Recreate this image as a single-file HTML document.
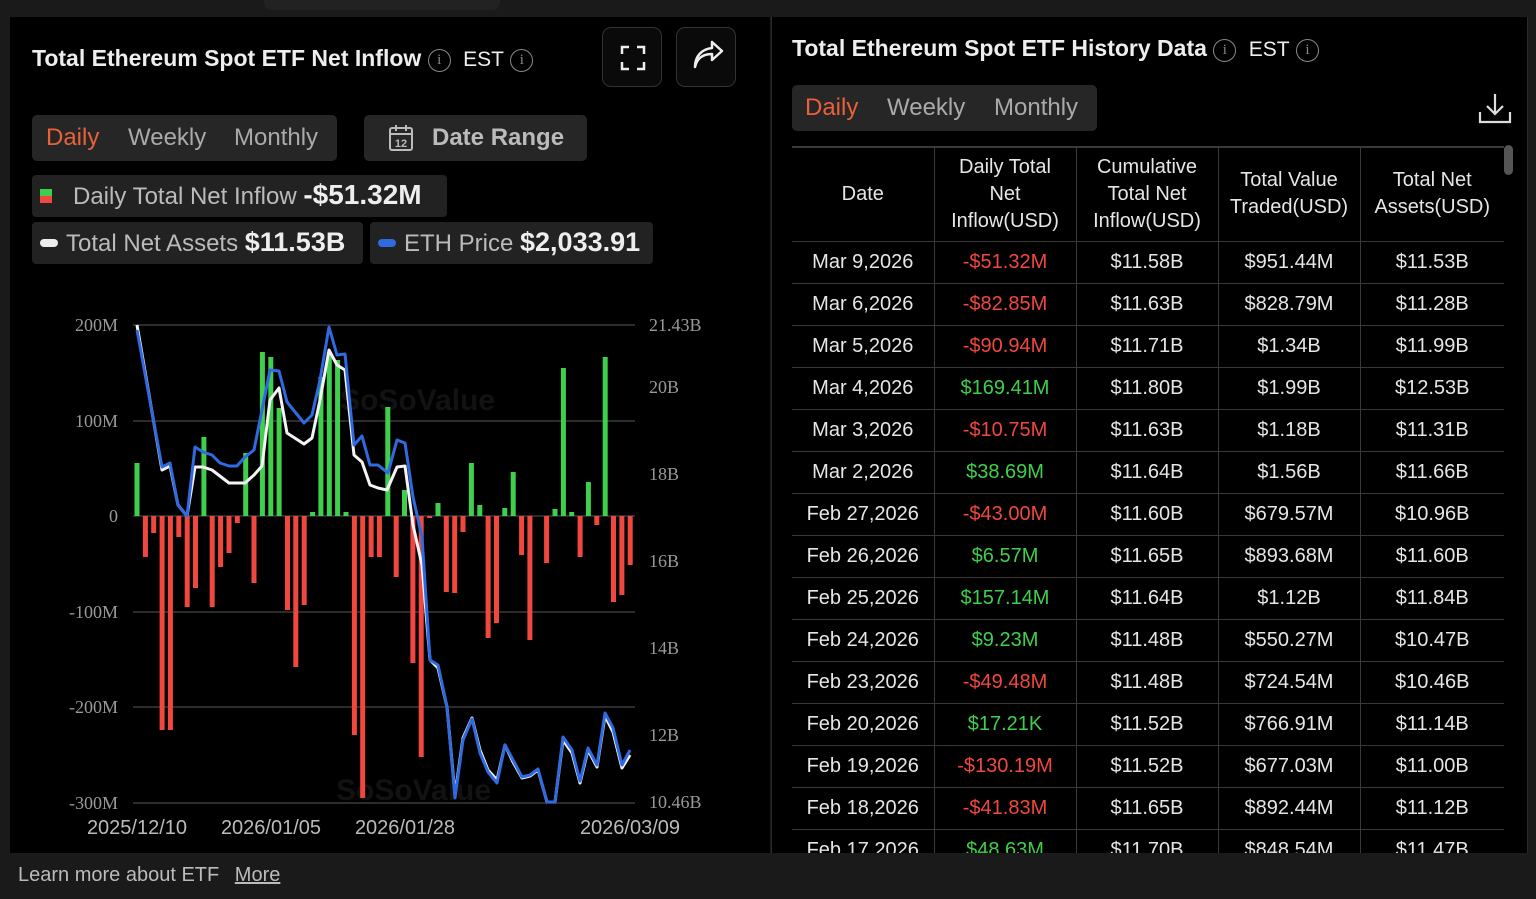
<!DOCTYPE html>
<html><head><meta charset="utf-8"><style>
*{margin:0;padding:0;box-sizing:border-box}
body{width:1536px;height:899px;background:#1a1a1a;overflow:hidden;font-family:"Liberation Sans",sans-serif;color:#e8e8e8;position:relative}
.abs{position:absolute}
.lp{left:10px;top:17px;width:760px;height:836px;background:#000}
.rp{left:771px;top:17px;width:757px;height:836px;background:#000;border-left:1px solid #2a2a2a;border-right:1px solid #2a2a2a}
.top{left:26px;top:0;width:1510px;height:17px;background:#1a1a1a;border-radius:0 0 10px 10px}
.top2{left:264px;top:0;width:236px;height:10px;background:#222;border-radius:0 0 8px 8px}
.title{font-size:23px;font-weight:bold;color:#eee;white-space:nowrap}
.info{display:inline-block;width:23px;height:23px;border:1.5px solid #888;border-radius:50%;color:#888;font-size:15px;text-align:center;line-height:20px;font-weight:normal;vertical-align:2px;font-family:"Liberation Serif",serif}
.seg{background:#262626;border-radius:5px;font-size:24px;color:#aaa}
.seg span{position:absolute;top:9px}
.pill{background:#222;border-radius:4px;font-size:24px;color:#bbb;white-space:nowrap;padding-left:8px;line-height:40px}
.pill b{color:#eee}
.btn{border:1.5px solid #333;border-radius:9px;width:60px;height:60px;background:#0a0a0a}
.ax{font-family:"Liberation Serif",serif;font-size:18px;fill:#999}
table{border-collapse:collapse;position:absolute;left:792px;top:146px;width:712px;table-layout:fixed}
td{border:1.5px solid #3a3a3a;text-align:center;font-size:20px;height:42px;color:#e6e6e6;border-left:none}
td:first-child{border-left:none}
td:last-child{border-right:none}
tr.h td{height:94px;line-height:27px;border-top:2px solid #3a3a3a}
.r{color:#f0483e}.g{color:#3fcf4c}
</style></head><body>
<div class="abs top"></div><div class="abs top2"></div>
<div class="abs lp"></div>
<div class="abs rp"></div>

<div class="abs title" style="left:32px;top:45px">Total Ethereum Spot ETF Net Inflow <span class="info">i</span> <span style="font-weight:normal;font-size:21px;margin-left:6px">EST</span> <span class="info">i</span></div>
<div class="abs btn" style="left:602px;top:27px"><svg width="60" height="60"><path d="M19 26v-7h7M34 19h7v7M41 34v7h-7M26 41h-7v-7" stroke="#eee" stroke-width="2.5" fill="none"/></svg></div>
<div class="abs btn" style="left:676px;top:27px"><svg width="60" height="60"><path d="M18 39c2-9 8-13 17-13v6l10-9-10-9v6c-10 1-17 8-17 19z" stroke="#eee" stroke-width="2.5" fill="none" stroke-linejoin="round"/></svg></div>

<div class="abs seg" style="left:32px;top:115px;width:305px;height:46px"><span style="left:14px;color:#e8613a">Daily</span><span style="left:96px">Weekly</span><span style="left:202px">Monthly</span></div>
<div class="abs seg" style="left:364px;top:115px;width:223px;height:46px;font-weight:bold;color:#bbb"><svg class="abs" style="left:24px;top:8px" width="26" height="30"><rect x="2" y="5" width="22" height="22" rx="2" stroke="#bbb" stroke-width="2" fill="none"/><path d="M2 11h22M8 2v6M18 2v6" stroke="#bbb" stroke-width="2"/><text x="13" y="24" font-size="11" fill="#bbb" text-anchor="middle" font-family="Liberation Sans">12</text></svg><span style="left:68px">Date Range</span></div>

<div class="abs pill" style="left:32px;top:175px;width:415px"><svg width="14" height="16" style="vertical-align:-1px;margin-right:19px"><rect y="0" width="12" height="7" fill="#3fcf4c"/><rect y="7" width="12" height="7" fill="#f0483e"/></svg>Daily Total Net Inflow <b style="font-size:28px">-$51.32M</b></div>
<div class="abs pill" style="left:32px;top:222px;width:331px"><span style="display:inline-block;width:18px;height:8px;background:#eee;border-radius:4px;vertical-align:4px;margin-right:8px"></span>Total Net Assets <b style="font-size:27px">$11.53B</b></div>
<div class="abs pill" style="left:370px;top:222px;width:283px"><span style="display:inline-block;width:18px;height:8px;background:#2f6ae0;border-radius:4px;vertical-align:4px;margin-right:8px"></span>ETH Price <b style="font-size:27px">$2,033.91</b></div>

<svg class="abs" style="left:0;top:0" width="770" height="853">
<g stroke="#3a3a3a" stroke-width="1.5">
<line x1="133" y1="325" x2="635" y2="325"/><line x1="133" y1="421" x2="635" y2="421"/><line x1="133" y1="516" x2="635" y2="516"/><line x1="133" y1="612" x2="635" y2="612"/><line x1="133" y1="707" x2="635" y2="707"/><line x1="133" y1="803" x2="635" y2="803"/>
</g>
<g class="ax" text-anchor="end"><text x="118" y="331">200M</text><text x="118" y="427">100M</text><text x="118" y="522">0</text><text x="118" y="618">-100M</text><text x="118" y="713">-200M</text><text x="118" y="809">-300M</text></g>
<g class="ax"><text x="649" y="331">21.43B</text><text x="649" y="393">20B</text><text x="649" y="480">18B</text><text x="649" y="567">16B</text><text x="649" y="654">14B</text><text x="649" y="741">12B</text><text x="649" y="808">10.46B</text></g>
<g font-size="20" fill="#bbb" text-anchor="middle"><text x="137" y="834">2025/12/10</text><text x="271" y="834">2026/01/05</text><text x="405" y="834">2026/01/28</text><text x="630" y="834">2026/03/09</text></g>
<g opacity="0.13" fill="#888" font-weight="bold" font-size="30"><text x="340" y="410">SoSoValue</text><text x="336" y="800">SoSoValue</text></g>
<g stroke-width="5">
<g stroke="#3fcf4c">
<line x1="137" y1="516" x2="137" y2="463"/><line x1="203.9" y1="516" x2="203.9" y2="437"/><line x1="245.7" y1="516" x2="245.7" y2="453"/><line x1="262.4" y1="516" x2="262.4" y2="352"/><line x1="270.8" y1="516" x2="270.8" y2="357"/><line x1="279.1" y1="516" x2="279.1" y2="408"/><line x1="312.6" y1="516" x2="312.6" y2="512"/><line x1="320.9" y1="516" x2="320.9" y2="377"/><line x1="329.3" y1="516" x2="329.3" y2="352"/><line x1="337.6" y1="516" x2="337.6" y2="360"/><line x1="346" y1="516" x2="346" y2="512"/><line x1="387.8" y1="516" x2="387.8" y2="407"/><line x1="404.5" y1="516" x2="404.5" y2="490"/><line x1="438" y1="516" x2="438" y2="503"/><line x1="471.4" y1="516" x2="471.4" y2="463"/><line x1="479.8" y1="516" x2="479.8" y2="505"/><line x1="504.8" y1="516" x2="504.8" y2="508"/><line x1="513.2" y1="516" x2="513.2" y2="472"/><line x1="555" y1="516" x2="555" y2="509"/><line x1="563.4" y1="516" x2="563.4" y2="368"/><line x1="571.7" y1="516" x2="571.7" y2="512"/><line x1="588.4" y1="516" x2="588.4" y2="482"/><line x1="605.2" y1="516" x2="605.2" y2="357"/>
</g>
<g stroke="#f0483e">
<line x1="145.4" y1="516" x2="145.4" y2="557"/><line x1="153.7" y1="516" x2="153.7" y2="533"/><line x1="162.1" y1="516" x2="162.1" y2="730"/><line x1="170.4" y1="516" x2="170.4" y2="730"/><line x1="178.8" y1="516" x2="178.8" y2="537"/><line x1="187.2" y1="516" x2="187.2" y2="607"/><line x1="195.5" y1="516" x2="195.5" y2="588"/><line x1="212.2" y1="516" x2="212.2" y2="607"/><line x1="220.6" y1="516" x2="220.6" y2="567"/><line x1="229" y1="516" x2="229" y2="553"/><line x1="237.3" y1="516" x2="237.3" y2="523"/><line x1="254" y1="516" x2="254" y2="583"/><line x1="287.5" y1="516" x2="287.5" y2="610"/><line x1="295.8" y1="516" x2="295.8" y2="667"/><line x1="304.2" y1="516" x2="304.2" y2="605"/><line x1="354.4" y1="516" x2="354.4" y2="735"/><line x1="362.7" y1="516" x2="362.7" y2="798"/><line x1="371.1" y1="516" x2="371.1" y2="557"/><line x1="379.4" y1="516" x2="379.4" y2="557"/><line x1="396.2" y1="516" x2="396.2" y2="577"/><line x1="412.9" y1="516" x2="412.9" y2="663"/><line x1="421.2" y1="516" x2="421.2" y2="757"/><line x1="429.6" y1="516" x2="429.6" y2="518"/><line x1="446.3" y1="516" x2="446.3" y2="592"/><line x1="454.7" y1="516" x2="454.7" y2="593"/><line x1="463" y1="516" x2="463" y2="532"/><line x1="488.1" y1="516" x2="488.1" y2="638"/><line x1="496.5" y1="516" x2="496.5" y2="623"/><line x1="521.6" y1="516" x2="521.6" y2="555"/><line x1="529.9" y1="516" x2="529.9" y2="640"/><line x1="546.6" y1="516" x2="546.6" y2="563"/><line x1="580.1" y1="516" x2="580.1" y2="557"/><line x1="596.8" y1="516" x2="596.8" y2="525"/><line x1="613.5" y1="516" x2="613.5" y2="602"/><line x1="621.9" y1="516" x2="621.9" y2="595"/><line x1="630.2" y1="516" x2="630.2" y2="565"/>
</g></g>
<polyline fill="none" stroke="#f4f4f4" stroke-width="3" stroke-linejoin="round" points="137,325 162,470 170,466 178,505 187,516 195,467 203,467 212,470 229,483 245,483 254,475 262,466 270,400 279,388 287,433 304,444 312,438 320,400 329,350 337,365 345,370 354,455 362,462 370,485 378,488 387,490 397,467 405,466 413,525 422,565 430,660 438,668 447,707 455,795 463,738 472,718 480,750 488,770 497,780 505,745 513,762 522,778 530,776 538,770 547,802 555,802 563,740 572,753 580,783 588,750 597,767 605,716 613,732 622,768 630,755"/>
<polyline fill="none" stroke="#2f6ae0" stroke-width="3" stroke-linejoin="round" points="137,330 162,467 170,463 178,505 187,516 195,447 203,452 212,455 220,463 229,466 237,466 245,457 254,450 262,410 270,370 279,371 287,402 304,423 312,415 320,380 329,327 337,355 345,354 354,445 362,436 370,465 378,465 388,473 397,440 405,443 413,497 422,537 430,660 438,665 447,707 455,798 463,740 472,719 480,753 488,772 497,783 505,745 513,760 522,777 530,775 538,769 547,802 555,802 563,737 572,750 580,781 588,748 597,765 605,713 613,728 622,765 630,750"/>
</svg>

<div class="abs title" style="left:792px;top:35px">Total Ethereum Spot ETF History Data <span class="info">i</span> <span style="font-weight:normal;font-size:21px;margin-left:6px">EST</span> <span class="info">i</span></div>
<div class="abs seg" style="left:792px;top:85px;width:305px;height:46px"><span style="left:13px;color:#e8613a">Daily</span><span style="left:95px">Weekly</span><span style="left:202px">Monthly</span></div>
<svg class="abs" style="left:1478px;top:92px" width="34" height="32"><path d="M17 2v20M9 14l8 8 8-8M2 20v10h30V20" stroke="#ddd" stroke-width="2.2" fill="none"/></svg>
<div class="abs" style="left:1504px;top:145px;width:9px;height:30px;background:#555;border-radius:5px"></div>

<div class="abs" style="left:792px;top:146px;width:712px;height:707px;overflow:hidden">
<table style="left:0;top:0">
<colgroup><col style="width:142px"><col style="width:142px"><col style="width:142px"><col style="width:142px"><col style="width:144px"></colgroup>
<tr class="h"><td>Date</td><td>Daily Total<br>Net<br>Inflow(USD)</td><td>Cumulative<br>Total Net<br>Inflow(USD)</td><td>Total Value<br>Traded(USD)</td><td>Total Net<br>Assets(USD)</td></tr>
<tr><td>Mar 9,2026</td><td class="r">-$51.32M</td><td>$11.58B</td><td>$951.44M</td><td>$11.53B</td></tr>
<tr><td>Mar 6,2026</td><td class="r">-$82.85M</td><td>$11.63B</td><td>$828.79M</td><td>$11.28B</td></tr>
<tr><td>Mar 5,2026</td><td class="r">-$90.94M</td><td>$11.71B</td><td>$1.34B</td><td>$11.99B</td></tr>
<tr><td>Mar 4,2026</td><td class="g">$169.41M</td><td>$11.80B</td><td>$1.99B</td><td>$12.53B</td></tr>
<tr><td>Mar 3,2026</td><td class="r">-$10.75M</td><td>$11.63B</td><td>$1.18B</td><td>$11.31B</td></tr>
<tr><td>Mar 2,2026</td><td class="g">$38.69M</td><td>$11.64B</td><td>$1.56B</td><td>$11.66B</td></tr>
<tr><td>Feb 27,2026</td><td class="r">-$43.00M</td><td>$11.60B</td><td>$679.57M</td><td>$10.96B</td></tr>
<tr><td>Feb 26,2026</td><td class="g">$6.57M</td><td>$11.65B</td><td>$893.68M</td><td>$11.60B</td></tr>
<tr><td>Feb 25,2026</td><td class="g">$157.14M</td><td>$11.64B</td><td>$1.12B</td><td>$11.84B</td></tr>
<tr><td>Feb 24,2026</td><td class="g">$9.23M</td><td>$11.48B</td><td>$550.27M</td><td>$10.47B</td></tr>
<tr><td>Feb 23,2026</td><td class="r">-$49.48M</td><td>$11.48B</td><td>$724.54M</td><td>$10.46B</td></tr>
<tr><td>Feb 20,2026</td><td class="g">$17.21K</td><td>$11.52B</td><td>$766.91M</td><td>$11.14B</td></tr>
<tr><td>Feb 19,2026</td><td class="r">-$130.19M</td><td>$11.52B</td><td>$677.03M</td><td>$11.00B</td></tr>
<tr><td>Feb 18,2026</td><td class="r">-$41.83M</td><td>$11.65B</td><td>$892.44M</td><td>$11.12B</td></tr>
<tr><td>Feb 17,2026</td><td class="g">$48.63M</td><td>$11.70B</td><td>$848.54M</td><td>$11.47B</td></tr>
</table></div>

<div class="abs" style="left:10px;top:853px;width:1526px;height:46px;background:#1a1a1a"></div>
<div class="abs" style="left:18px;top:864px;font-size:20px;color:#bbb">Learn more about ETF <span style="margin-left:10px;text-decoration:underline">More</span></div>
</body></html>
